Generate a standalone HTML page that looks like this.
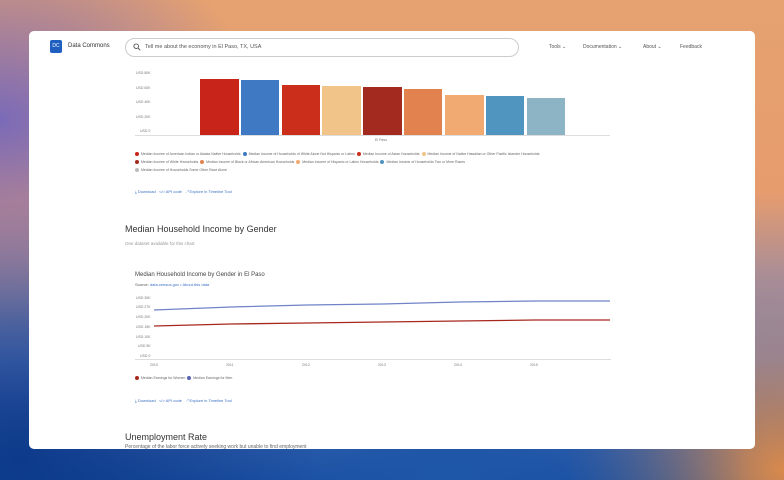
<!DOCTYPE html>
<html><head><meta charset="utf-8"><style>
*{margin:0;padding:0;box-sizing:border-box}
body{width:784px;height:480px;overflow:hidden;position:relative;font-family:"Liberation Sans",sans-serif;
background:
radial-gradient(ellipse 260px 200px at 0px 120px,#7a6ab8 0%,rgba(122,106,184,0) 100%),
radial-gradient(ellipse 300px 260px at 20px 460px,#0d3a8a 0%,rgba(13,58,138,0) 100%),
radial-gradient(ellipse 300px 200px at 450px 480px,#1e56a8 0%,rgba(30,86,168,0) 100%),
radial-gradient(ellipse 220px 200px at 784px 470px,#d98a4c 0%,rgba(217,138,76,0) 100%),
linear-gradient(180deg,#e6a270 0%,#e79c6e 40%,#6a7fc0 75%,#1a4ea0 100%);}
.win{position:absolute;left:29px;top:31px;width:726px;height:418px;background:#fff;border-radius:5px;overflow:hidden}
.abs{position:absolute}
.t{position:absolute;white-space:nowrap;color:#444}
.ax{font-size:3.5px;color:#777}
.leg{font-size:3.5px;color:#666}
.dot{display:inline-block;width:4px;height:4px;border-radius:50%;vertical-align:middle;margin-right:2px}
.lnk{font-size:4px;color:#3b6fc4}
</style></head><body>
<div class="win">
 <!-- header -->
 <div class="abs" style="left:21px;top:9px;width:12px;height:13px;background:#1f5fbf;border-radius:2px;color:#fff;font-size:5px;text-align:center;line-height:13px">DC</div>
 <div class="t" style="left:39px;top:12px;font-size:6px;color:#333">Data Commons</div>
 <div class="abs" style="left:96px;top:7px;width:394px;height:19px;border:1px solid #ccc;border-radius:10px"></div>
 <svg class="abs" style="left:104px;top:12px" width="8" height="8" viewBox="0 0 8 8"><circle cx="3.2" cy="3.2" r="2.3" fill="none" stroke="#555" stroke-width="0.9"/><line x1="5" y1="5" x2="7.3" y2="7.3" stroke="#555" stroke-width="0.9"/></svg>
 <div class="t" style="left:116px;top:13px;font-size:5.5px;color:#555">Tell me about the economy in El Paso, TX, USA</div>
 <div class="t" style="left:520px;top:13px;font-size:5px;color:#555">Tools ⌄</div>
 <div class="t" style="left:554px;top:13px;font-size:5px;color:#555">Documentation ⌄</div>
 <div class="t" style="left:614px;top:13px;font-size:5px;color:#555">About ⌄</div>
 <div class="t" style="left:651px;top:13px;font-size:5px;color:#555">Feedback</div>

 <!-- bar chart -->
 <div class="t ax" style="left:107px;top:40px">USD 80K</div>
 <div class="t ax" style="left:107px;top:55px">USD 60K</div>
 <div class="t ax" style="left:107px;top:69px">USD 40K</div>
 <div class="t ax" style="left:107px;top:84px">USD 20K</div>
 <div class="t ax" style="left:111px;top:98px">USD 0</div>
 <div class="abs" style="left:106px;top:104px;width:475px;height:1px;background:#ddd"></div>
 <div class="abs" style="left:171px;top:48px;width:39px;height:56px;background:#c8241a"></div>
 <div class="abs" style="left:212px;top:49px;width:38px;height:55px;background:#3f79c4"></div>
 <div class="abs" style="left:253px;top:54px;width:38px;height:50px;background:#cc2e1c"></div>
 <div class="abs" style="left:293px;top:55px;width:39px;height:49px;background:#f1c48a"></div>
 <div class="abs" style="left:334px;top:56px;width:39px;height:48px;background:#a22a1e"></div>
 <div class="abs" style="left:375px;top:58px;width:38px;height:46px;background:#e2834f"></div>
 <div class="abs" style="left:416px;top:64px;width:39px;height:40px;background:#f0aa72"></div>
 <div class="abs" style="left:457px;top:65px;width:38px;height:39px;background:#4f95c0"></div>
 <div class="abs" style="left:498px;top:67px;width:38px;height:37px;background:#8cb4c4"></div>
 <div class="t ax" style="left:346px;top:107px">El Paso</div>

 <div class="t leg" style="left:106px;top:121px"><span class="dot" style="background:#c8241a"></span>Median Income of American Indian or Alaska Native Households &nbsp;<span class="dot" style="background:#3f79c4"></span>Median Income of Households of White Alone Not Hispanic or Latino &nbsp;<span class="dot" style="background:#cc2e1c"></span>Median Income of Asian Households &nbsp;<span class="dot" style="background:#f1c48a"></span>Median Income of Native Hawaiian or Other Pacific Islander Households</div>
 <div class="t leg" style="left:106px;top:129px"><span class="dot" style="background:#a22a1e"></span>Median Income of White Households &nbsp;<span class="dot" style="background:#e2834f"></span>Median Income of Black or African American Households &nbsp;<span class="dot" style="background:#f0aa72"></span>Median Income of Hispanic or Latino Households &nbsp;<span class="dot" style="background:#4f95c0"></span>Median Income of Households Two or More Races</div>
 <div class="t leg" style="left:106px;top:137px"><span class="dot" style="background:#bbb"></span>Median Income of Households Some Other Race Alone</div>
 <div class="t lnk" style="left:106px;top:158px">⤓ Download &nbsp; &lt;/&gt; API code &nbsp; ↗ Explore in Timeline Tool</div>

 <div class="t" style="left:96px;top:193px;font-size:9px;color:#333">Median Household Income by Gender</div>
 <div class="t" style="left:96px;top:210px;font-size:4.5px;color:#999">One dataset available for this chart</div>

 <!-- line chart -->
 <div class="t" style="left:106px;top:241px;font-size:6px;color:#444">Median Household Income by Gender in El Paso</div>
 <div class="t" style="left:106px;top:251px;font-size:4px;color:#555">Source: <span style="color:#3b6fc4">data.census.gov • About this data</span></div>
 <div class="t ax" style="left:107px;top:265px">USD 30K</div>
 <div class="t ax" style="left:107px;top:274px">USD 27K</div>
 <div class="t ax" style="left:107px;top:284px">USD 20K</div>
 <div class="t ax" style="left:107px;top:294px">USD 15K</div>
 <div class="t ax" style="left:107px;top:304px">USD 10K</div>
 <div class="t ax" style="left:109px;top:313px">USD 5K</div>
 <div class="t ax" style="left:111px;top:323px">USD 0</div>
 <div class="abs" style="left:106px;top:328px;width:476px;height:1px;background:#ddd"></div>
 <svg class="abs" style="left:0;top:0" width="726" height="418">
  <polyline points="125,279 202,276 278,274 354,273 430,271 506,270 581,270" fill="none" stroke="#6f83c6" stroke-width="1.3"/>
  <polyline points="125,295 202,293 278,292 354,291 430,290 506,289 581,289" fill="none" stroke="#a8281e" stroke-width="1.3"/>
 </svg>
 <div class="t ax" style="left:121px;top:332px">2010</div>
 <div class="t ax" style="left:197px;top:332px">2011</div>
 <div class="t ax" style="left:273px;top:332px">2012</div>
 <div class="t ax" style="left:349px;top:332px">2013</div>
 <div class="t ax" style="left:425px;top:332px">2014</div>
 <div class="t ax" style="left:501px;top:332px">2015</div>
 <div class="t leg" style="left:106px;top:345px"><span class="dot" style="background:#a8281e"></span>Median Earnings for Women &nbsp;<span class="dot" style="background:#5a64b4"></span>Median Earnings for Men</div>
 <div class="t lnk" style="left:106px;top:367px">⤓ Download &nbsp; &lt;/&gt; API code &nbsp; ↗ Explore in Timeline Tool</div>

 <div class="t" style="left:96px;top:401px;font-size:9px;color:#333">Unemployment Rate</div>
 <div class="t" style="left:96px;top:413px;font-size:5px;color:#666">Percentage of the labor force actively seeking work but unable to find employment</div>
</div>
</body></html>
